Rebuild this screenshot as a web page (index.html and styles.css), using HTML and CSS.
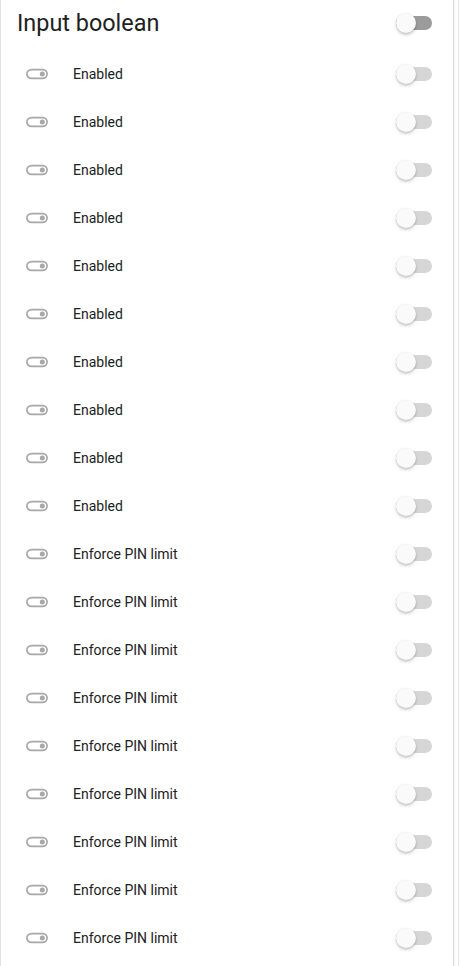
FILE: index.html
```html
<!DOCTYPE html>
<html>
<head>
<meta charset="utf-8">
<link rel="stylesheet" href="styles.css">
</head>
<body>
<div class="page">
  <div class="card">
    <div class="header">
      <div class="title">Input boolean</div>
      <div class="switch switch-header"><span class="track"></span><span class="knob"></span></div>
    </div>
    <div class="rows" id="rows"></div>
  </div>
  <div class="side"></div>
</div>
<template id="row-tpl">
  <div class="row">
    <div class="badge">
      <svg viewBox="0 0 24 24" width="24" height="24"><rect x="1.9" y="7.6" width="20.2" height="8.8" rx="4.4" fill="none" stroke="currentColor" stroke-width="1.7"/><circle cx="17.3" cy="12" r="2.5" fill="currentColor"/></svg>
    </div>
    <div class="name"></div>
    <div class="switch"><span class="track"></span><span class="knob"></span></div>
  </div>
</template>
<script src="script.js"></script>
</body>
</html>
```
FILE: script.js
```js
const names = [];
for (let i = 0; i < 10; i++) names.push("Enabled");
for (let i = 0; i < 9; i++) names.push("Enforce PIN limit");
const rows = document.getElementById("rows");
const tpl = document.getElementById("row-tpl");
names.forEach(n => {
  const node = tpl.content.cloneNode(true);
  node.querySelector(".name").textContent = n;
  rows.appendChild(node);
});
```
FILE: styles.css
```css
html, body {
  margin: 0;
  padding: 0;
  background: #ffffff;
  height: 100%;
  overflow: hidden;
}
.page {
  display: flex;
  align-items: flex-start;
  font-family: Roboto, "Liberation Sans", sans-serif;
  color: #212121;
}
.card {
  width: 452px;
  flex: none;
  background: #fff;
  border-left: 1px solid #e3e3e3;
  border-right: 1px solid #dcdcdc;
  box-shadow: 1px 0 2px rgba(0,0,0,0.06);
  min-height: 1000px;
}
.side {
  margin-left: 4px;
  width: 3px;
  height: 1000px;
  border-left: 1px solid #e6e6e6;
}
.header {
  height: 46px;
  display: flex;
  align-items: center;
  padding: 0 21px 0 16px;
}
.title {
  flex: 1;
  font-size: 23.4px;
  line-height: 32px;
  color: #212121;
  margin-top: -1px;
}
.rows {
  display: flex;
  flex-direction: column;
  gap: 8px;
  padding: 8px 21px 0 16px;
}
.row {
  height: 40px;
  display: flex;
  align-items: center;
}
.badge {
  width: 40px;
  height: 40px;
  display: flex;
  align-items: center;
  justify-content: center;
  color: #a8a8a8;
  flex: none;
}
.badge svg { display: block; }
.name {
  flex: 1;
  margin-left: 16px;
  font-size: 14px;
  color: #212121;
}
.switch {
  position: relative;
  width: 36px;
  height: 20px;
  flex: none;
}
.track {
  position: absolute;
  left: 0;
  top: 3px;
  width: 36px;
  height: 14px;
  border-radius: 7px;
  background: #d6d6d6;
}
.switch-header .track { background: #9b9b9b; }
.knob {
  position: absolute;
  left: 0;
  top: 0;
  width: 20px;
  height: 20px;
  border-radius: 50%;
  background: #fafafa;
  box-shadow: 0 2px 3px rgba(0,0,0,0.22), 0 0 1px rgba(0,0,0,0.12);
}
```
